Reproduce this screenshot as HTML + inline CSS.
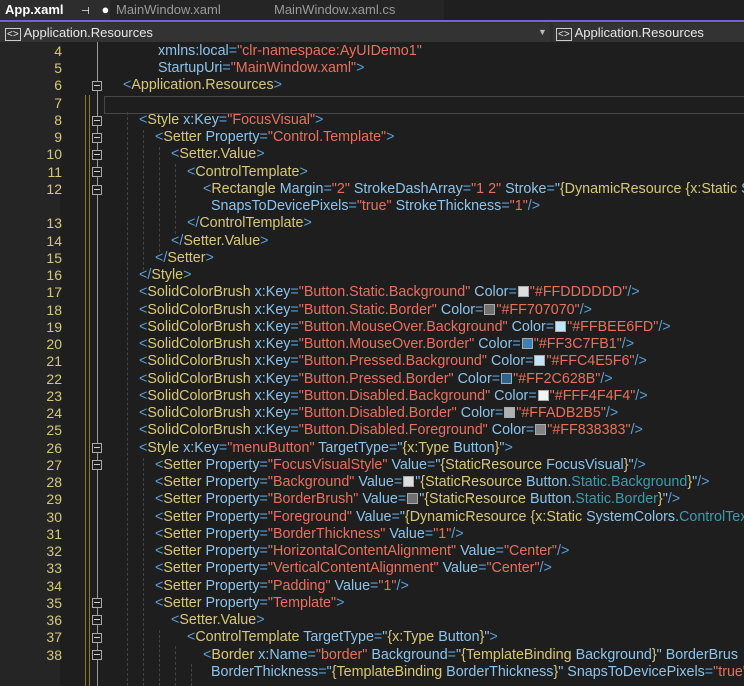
<!DOCTYPE html>
<html><head><meta charset="utf-8"><style>
body{margin:0;width:744px;height:686px;overflow:hidden;background:#1e1e1e;font-family:"Liberation Sans",sans-serif;position:relative}
.clip{position:absolute;left:0;top:0;width:744px;height:686px;overflow:hidden}
.tabs{position:absolute;left:0;top:0;width:744px;height:20px;background:#1f1f1f}
.tab{position:absolute;top:0;height:20px;line-height:20px;font-size:13px;color:#9a9a9a}
.pl{position:absolute;left:0;top:20px;width:744px;height:2px;background:#7160e8}
.nav{position:absolute;left:0;top:22px;width:744px;height:20px;background:#2d2d2d}
.dd{position:absolute;top:23px;height:19px;background:#333;color:#e8e8e8;font-size:13px;line-height:19px;overflow:hidden}
.gut{position:absolute;left:0;top:42px;width:60px;height:644px;background:#252526}
.r{position:absolute;height:17px;line-height:17px;font-size:14.3px;white-space:pre;color:#8cc4ec}
.ln{position:absolute;left:20px;width:42px;text-align:right;font-size:14px;line-height:17px;color:#d6c87a}
.k{color:#5a9fd6}.n{color:#d8c878}.a{color:#8cc4ec}.s{color:#e8705e}.m{color:#d8c878}.t{color:#3f9ab0}
.sw{display:inline-block;width:9px;height:9px;border:1px solid #aaa;margin:0 1px;vertical-align:-1px}
.box{position:absolute;left:92px;width:8px;height:8px;border:1px solid #aaa;background:#1e1e1e}
.box:after{content:"";position:absolute;left:1px;top:3px;width:6px;height:1px;background:#ccc}
.vg{position:absolute;border-left:1px dashed #444;width:0}
</style></head><body><div class="clip">
<div class="tabs">
<div class="tab" style="left:0;width:108px;background:#2d2d2d;color:#fff;font-weight:bold;padding-left:5px">App.xaml <span style="font-weight:normal;font-size:10px;margin-left:14px">⊣</span> <span style="margin-left:8px">●</span></div>
<div class="tab" style="left:110px;width:158px;background:#252526;padding-left:6px">MainWindow.xaml</div>
<div class="tab" style="left:270px;width:170px;background:#252526;padding-left:4px">MainWindow.xaml.cs</div>
</div>
<div class="pl"></div>
<div class="nav"></div>
<div class="dd" style="left:0;width:545px;padding-left:5px"><span style="font-size:10px;border:1px solid #ccc;padding:0 1px;line-height:8px">&lt;&gt;</span> Application.Resources<span style="position:absolute;left:538px;font-size:9px;color:#bbb">▼</span></div>
<div class="dd" style="left:553px;width:188px;padding-left:3px"><span style="font-size:10px;border:1px solid #ccc;padding:0 1px;line-height:8px">&lt;&gt;</span> Application.Resources</div>
<div class="gut"></div>
<div style="position:absolute;left:85px;top:95px;width:1px;height:591px;background:#8b7a2a"></div>
<div style="position:absolute;left:89px;top:95px;width:1px;height:591px;background:#8b7a2a"></div>
<div style="position:absolute;left:97px;top:42px;width:1px;height:644px;background:#9a9a9a"></div>
<div style="position:absolute;left:104px;top:96px;width:640px;height:16px;border:1px solid #464646;border-right:none"></div>
<div class="vg" style="left:127px;top:112px;height:574px"></div>
<div class="vg" style="left:143px;top:130px;height:140px"></div>
<div class="vg" style="left:159px;top:147px;height:105px"></div>
<div class="vg" style="left:175px;top:164px;height:70px"></div>
<div class="vg" style="left:143px;top:458px;height:228px"></div>
<div class="vg" style="left:159px;top:630px;height:56px"></div>
<div class="vg" style="left:175px;top:646px;height:40px"></div>
<div class="vg" style="left:191px;top:664px;height:22px"></div>
<div class="box" style="top:81px"></div><div class="box" style="top:116px"></div><div class="box" style="top:133px"></div><div class="box" style="top:150px"></div><div class="box" style="top:167px"></div><div class="box" style="top:185px"></div><div class="box" style="top:443px"></div><div class="box" style="top:460px"></div><div class="box" style="top:598px"></div><div class="box" style="top:615px"></div><div class="box" style="top:633px"></div><div class="box" style="top:650px"></div>
<div class="ln" style="top:43px">4</div><div class="ln" style="top:60px">5</div><div class="ln" style="top:77px">6</div><div class="ln" style="top:95px">7</div><div class="ln" style="top:112px">8</div><div class="ln" style="top:129px">9</div><div class="ln" style="top:146px">10</div><div class="ln" style="top:164px">11</div><div class="ln" style="top:181px">12</div><div class="ln" style="top:215px">13</div><div class="ln" style="top:233px">14</div><div class="ln" style="top:250px">15</div><div class="ln" style="top:267px">16</div><div class="ln" style="top:284px">17</div><div class="ln" style="top:302px">18</div><div class="ln" style="top:319px">19</div><div class="ln" style="top:336px">20</div><div class="ln" style="top:353px">21</div><div class="ln" style="top:371px">22</div><div class="ln" style="top:388px">23</div><div class="ln" style="top:405px">24</div><div class="ln" style="top:422px">25</div><div class="ln" style="top:440px">26</div><div class="ln" style="top:457px">27</div><div class="ln" style="top:474px">28</div><div class="ln" style="top:491px">29</div><div class="ln" style="top:509px">30</div><div class="ln" style="top:526px">31</div><div class="ln" style="top:543px">32</div><div class="ln" style="top:560px">33</div><div class="ln" style="top:578px">34</div><div class="ln" style="top:595px">35</div><div class="ln" style="top:612px">36</div><div class="ln" style="top:629px">37</div><div class="ln" style="top:647px">38</div>
<div class="r" style="left:158px;top:43px"><span class="a">xmlns:local</span><span class="k">=</span><span class="s">"clr-namespace:AyUIDemo1"</span></div>
<div class="r" style="left:158px;top:60px"><span class="a">StartupUri</span><span class="k">=</span><span class="s">"MainWindow.xaml"</span><span class="k">&gt;</span></div>
<div class="r" style="left:123px;top:77px"><span class="k">&lt;</span><span class="n">Application.Resources</span><span class="k">&gt;</span></div>
<div class="r" style="left:139px;top:112px"><span class="k">&lt;</span><span class="n">Style</span> <span class="a">x:Key</span><span class="k">=</span><span class="s">"FocusVisual"</span><span class="k">&gt;</span></div>
<div class="r" style="left:155px;top:129px"><span class="k">&lt;</span><span class="n">Setter</span> <span class="a">Property</span><span class="k">=</span><span class="s">"Control.Template"</span><span class="k">&gt;</span></div>
<div class="r" style="left:171px;top:146px"><span class="k">&lt;</span><span class="n">Setter.Value</span><span class="k">&gt;</span></div>
<div class="r" style="left:187px;top:164px"><span class="k">&lt;</span><span class="n">ControlTemplate</span><span class="k">&gt;</span></div>
<div class="r" style="left:203px;top:181px"><span class="k">&lt;</span><span class="n">Rectangle</span> <span class="a">Margin</span><span class="k">=</span><span class="s">"2"</span> <span class="a">StrokeDashArray</span><span class="k">=</span><span class="s">"1 2"</span> <span class="a">Stroke</span><span class="k">=</span>"<span class="m">{DynamicResource {x:Static</span> SystemColors</div>
<div class="r" style="left:211px;top:198px"><span class="a">SnapsToDevicePixels</span><span class="k">=</span><span class="s">"true"</span> <span class="a">StrokeThickness</span><span class="k">=</span><span class="s">"1"</span><span class="k">/&gt;</span></div>
<div class="r" style="left:187px;top:215px"><span class="k">&lt;/</span><span class="n">ControlTemplate</span><span class="k">&gt;</span></div>
<div class="r" style="left:171px;top:233px"><span class="k">&lt;/</span><span class="n">Setter.Value</span><span class="k">&gt;</span></div>
<div class="r" style="left:155px;top:250px"><span class="k">&lt;/</span><span class="n">Setter</span><span class="k">&gt;</span></div>
<div class="r" style="left:139px;top:267px"><span class="k">&lt;/</span><span class="n">Style</span><span class="k">&gt;</span></div>
<div class="r" style="left:139px;top:284px"><span class="k">&lt;</span><span class="n">SolidColorBrush</span> <span class="a">x:Key</span><span class="k">=</span><span class="s">"Button.Static.Background"</span> <span class="a">Color</span><span class="k">=</span><span class="sw" style="background:#ddd"></span><span class="s">"#FFDDDDDD"</span><span class="k">/&gt;</span></div>
<div class="r" style="left:139px;top:302px"><span class="k">&lt;</span><span class="n">SolidColorBrush</span> <span class="a">x:Key</span><span class="k">=</span><span class="s">"Button.Static.Border"</span> <span class="a">Color</span><span class="k">=</span><span class="sw" style="background:#707070"></span><span class="s">"#FF707070"</span><span class="k">/&gt;</span></div>
<div class="r" style="left:139px;top:319px"><span class="k">&lt;</span><span class="n">SolidColorBrush</span> <span class="a">x:Key</span><span class="k">=</span><span class="s">"Button.MouseOver.Background"</span> <span class="a">Color</span><span class="k">=</span><span class="sw" style="background:#bee6fd"></span><span class="s">"#FFBEE6FD"</span><span class="k">/&gt;</span></div>
<div class="r" style="left:139px;top:336px"><span class="k">&lt;</span><span class="n">SolidColorBrush</span> <span class="a">x:Key</span><span class="k">=</span><span class="s">"Button.MouseOver.Border"</span> <span class="a">Color</span><span class="k">=</span><span class="sw" style="background:#3c7fb1"></span><span class="s">"#FF3C7FB1"</span><span class="k">/&gt;</span></div>
<div class="r" style="left:139px;top:353px"><span class="k">&lt;</span><span class="n">SolidColorBrush</span> <span class="a">x:Key</span><span class="k">=</span><span class="s">"Button.Pressed.Background"</span> <span class="a">Color</span><span class="k">=</span><span class="sw" style="background:#c4e5f6"></span><span class="s">"#FFC4E5F6"</span><span class="k">/&gt;</span></div>
<div class="r" style="left:139px;top:371px"><span class="k">&lt;</span><span class="n">SolidColorBrush</span> <span class="a">x:Key</span><span class="k">=</span><span class="s">"Button.Pressed.Border"</span> <span class="a">Color</span><span class="k">=</span><span class="sw" style="background:#2c628b"></span><span class="s">"#FF2C628B"</span><span class="k">/&gt;</span></div>
<div class="r" style="left:139px;top:388px"><span class="k">&lt;</span><span class="n">SolidColorBrush</span> <span class="a">x:Key</span><span class="k">=</span><span class="s">"Button.Disabled.Background"</span> <span class="a">Color</span><span class="k">=</span><span class="sw" style="background:#f4f4f4"></span><span class="s">"#FFF4F4F4"</span><span class="k">/&gt;</span></div>
<div class="r" style="left:139px;top:405px"><span class="k">&lt;</span><span class="n">SolidColorBrush</span> <span class="a">x:Key</span><span class="k">=</span><span class="s">"Button.Disabled.Border"</span> <span class="a">Color</span><span class="k">=</span><span class="sw" style="background:#adb2b5"></span><span class="s">"#FFADB2B5"</span><span class="k">/&gt;</span></div>
<div class="r" style="left:139px;top:422px"><span class="k">&lt;</span><span class="n">SolidColorBrush</span> <span class="a">x:Key</span><span class="k">=</span><span class="s">"Button.Disabled.Foreground"</span> <span class="a">Color</span><span class="k">=</span><span class="sw" style="background:#838383"></span><span class="s">"#FF838383"</span><span class="k">/&gt;</span></div>
<div class="r" style="left:139px;top:440px"><span class="k">&lt;</span><span class="n">Style</span> <span class="a">x:Key</span><span class="k">=</span><span class="s">"menuButton"</span> <span class="a">TargetType</span><span class="k">=</span>"<span class="m">{x:Type</span> Button<span class="m">}</span>"<span class="k">&gt;</span></div>
<div class="r" style="left:155px;top:457px"><span class="k">&lt;</span><span class="n">Setter</span> <span class="a">Property</span><span class="k">=</span><span class="s">"FocusVisualStyle"</span> <span class="a">Value</span><span class="k">=</span>"<span class="m">{StaticResource</span> FocusVisual<span class="m">}</span>"<span class="k">/&gt;</span></div>
<div class="r" style="left:155px;top:474px"><span class="k">&lt;</span><span class="n">Setter</span> <span class="a">Property</span><span class="k">=</span><span class="s">"Background"</span> <span class="a">Value</span><span class="k">=</span><span class="sw" style="background:#ddd"></span>"<span class="m">{StaticResource</span> Button.<span class="t">Static.Background</span><span class="m">}</span>"<span class="k">/&gt;</span></div>
<div class="r" style="left:155px;top:491px"><span class="k">&lt;</span><span class="n">Setter</span> <span class="a">Property</span><span class="k">=</span><span class="s">"BorderBrush"</span> <span class="a">Value</span><span class="k">=</span><span class="sw" style="background:#707070"></span>"<span class="m">{StaticResource</span> Button.<span class="t">Static.Border</span><span class="m">}</span>"<span class="k">/&gt;</span></div>
<div class="r" style="left:155px;top:509px"><span class="k">&lt;</span><span class="n">Setter</span> <span class="a">Property</span><span class="k">=</span><span class="s">"Foreground"</span> <span class="a">Value</span><span class="k">=</span>"<span class="m">{DynamicResource {x:Static</span> SystemColors.<span class="t">ControlTex</span></div>
<div class="r" style="left:155px;top:526px"><span class="k">&lt;</span><span class="n">Setter</span> <span class="a">Property</span><span class="k">=</span><span class="s">"BorderThickness"</span> <span class="a">Value</span><span class="k">=</span><span class="s">"1"</span><span class="k">/&gt;</span></div>
<div class="r" style="left:155px;top:543px"><span class="k">&lt;</span><span class="n">Setter</span> <span class="a">Property</span><span class="k">=</span><span class="s">"HorizontalContentAlignment"</span> <span class="a">Value</span><span class="k">=</span><span class="s">"Center"</span><span class="k">/&gt;</span></div>
<div class="r" style="left:155px;top:560px"><span class="k">&lt;</span><span class="n">Setter</span> <span class="a">Property</span><span class="k">=</span><span class="s">"VerticalContentAlignment"</span> <span class="a">Value</span><span class="k">=</span><span class="s">"Center"</span><span class="k">/&gt;</span></div>
<div class="r" style="left:155px;top:578px"><span class="k">&lt;</span><span class="n">Setter</span> <span class="a">Property</span><span class="k">=</span><span class="s">"Padding"</span> <span class="a">Value</span><span class="k">=</span><span class="s">"1"</span><span class="k">/&gt;</span></div>
<div class="r" style="left:155px;top:595px"><span class="k">&lt;</span><span class="n">Setter</span> <span class="a">Property</span><span class="k">=</span><span class="s">"Template"</span><span class="k">&gt;</span></div>
<div class="r" style="left:171px;top:612px"><span class="k">&lt;</span><span class="n">Setter.Value</span><span class="k">&gt;</span></div>
<div class="r" style="left:187px;top:629px"><span class="k">&lt;</span><span class="n">ControlTemplate</span> <span class="a">TargetType</span><span class="k">=</span>"<span class="m">{x:Type</span> Button<span class="m">}</span>"<span class="k">&gt;</span></div>
<div class="r" style="left:203px;top:647px"><span class="k">&lt;</span><span class="n">Border</span> <span class="a">x:Name</span><span class="k">=</span><span class="s">"border"</span> <span class="a">Background</span><span class="k">=</span>"<span class="m">{TemplateBinding</span> Background<span class="m">}</span>" <span class="a">BorderBrus</span></div>
<div class="r" style="left:211px;top:664px"><span class="a">BorderThickness</span><span class="k">=</span>"<span class="m">{TemplateBinding</span> BorderThickness<span class="m">}</span>" <span class="a">SnapsToDevicePixels</span><span class="k">=</span><span class="s">"true"</span></div>
</div></body></html>
